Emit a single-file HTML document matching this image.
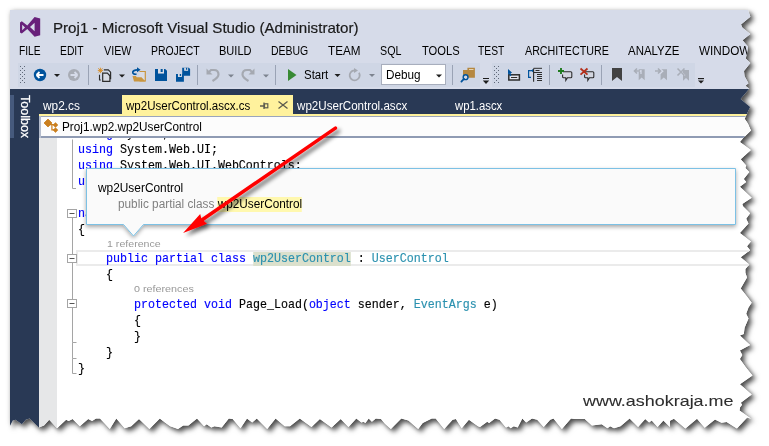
<!DOCTYPE html>
<html><head><meta charset="utf-8">
<style>
*{margin:0;padding:0;box-sizing:border-box}
html,body{width:769px;height:446px;overflow:hidden;background:#fff}
body{position:relative}
#sh{position:absolute;left:0;top:0;width:769px;height:446px;filter:drop-shadow(0 0 2.5px rgba(0,0,0,0.14)) drop-shadow(3px 3px 2.6px rgba(0,0,0,0.68))}
#win{position:absolute;left:0;top:0;width:769px;height:446px;background:#fff;clip-path:polygon(10px 10px,748px 10px,750.4px 16.8px,741px 24.6px,742.5px 27.8px,750.4px 34px,742.5px 40.3px,748px 46.6px,747.3px 52px,745.7px 58.4px,750.4px 63px,744px 71px,744.6px 76.3px,748.5px 83.3px,745.4px 85.7px,749.3px 88.8px,740.7px 99px,750.1px 106.9px,746.2px 115.5px,744.6px 118.7px,747.8px 123.4px,750.9px 130.4px,743px 138.3px,739.9px 142.1px,750.9px 149.9px,740.7px 159.3px,746.2px 165.6px,745.4px 168px,749.3px 171.9px,743.8px 179px,746.2px 182.1px,739.9px 186.8px,751.7px 197.8px,742.3px 204.1px,743px 206.3px,750.1px 213.3px,746.2px 218.8px,748.5px 223.5px,739.9px 233px,750.9px 241.6px,747px 246.3px,750.1px 250.2px,740.7px 257.3px,749.3px 264.4px,745.4px 269.1px,745.4px 272.8px,747px 277.6px,740.7px 288.5px,747px 296.4px,751.7px 302.7px,748.5px 307.4px,746.2px 313.7px,748.5px 318.4px,744.6px 327.8px,743.8px 334.1px,739.9px 335.5px,750.1px 344.9px,739.9px 350.4px,742.3px 355.1px,739.9px 359px,746.2px 367.7px,752.5px 375.5px,739.9px 384.2px,751.7px 394.4px,740.8px 402.7px,742.1px 404.7px,740.1px 407.2px,739.5px 410.4px,751.1px 418.8px,747.2px 417.5px,736.9px 428.5px,726.6px 422px,721.5px 422.7px,715px 419.5px,704.7px 427.8px,697px 418.8px,685.4px 428.5px,673.9px 418.8px,670px 420.7px,669.9px 426.9px,663.4px 420.4px,657.6px 426.9px,651.7px 420.4px,649.1px 422.4px,645.2px 419.1px,638.1px 426.9px,629.6px 418.5px,620.5px 426.3px,614px 428.2px,610.1px 426.3px,607.5px 428.2px,601.7px 424.3px,591.9px 425.6px,584.8px 419.1px,575px 419.1px,571px 418.5px,561.9px 428.9px,553.5px 418.5px,550.2px 419.8px,543.7px 426.9px,537.2px 419.8px,532px 418.5px,526.2px 422.4px,522.3px 418.5px,517.7px 427.6px,513.8px 426.3px,510.6px 428.2px,508.6px 426.3px,506px 427.6px,499.5px 419.8px,495px 418.5px,489.1px 423px,487.2px 421.7px,480px 426.9px,478px 426.3px,468.9px 419.8px,461.7px 428.2px,455.9px 419.1px,452.6px 419.8px,444.2px 428.9px,435.7px 418.5px,431.8px 418.5px,422.7px 423px,418.2px 428.9px,408.4px 420.4px,401.3px 418.5px,390.9px 428.9px,385px 423.7px,381px 419.1px,375.8px 418.5px,371.9px 421.7px,368.7px 418.5px,365.4px 423px,363.5px 421.7px,361.5px 422.4px,356.3px 418.5px,348.5px 426.9px,340.7px 419.1px,331.6px 427.6px,319.9px 419.1px,311.5px 426.9px,299.8px 418.5px,290px 426.3px,284.7px 426.3px,275.6px 418.5px,267.2px 428.9px,256.8px 418.5px,252.2px 422.4px,247px 418.5px,240.5px 428.2px,232.7px 419.1px,228.8px 418.5px,221.7px 427.6px,214.5px 426.3px,211.3px 427.6px,206.7px 424.3px,204.1px 426.3px,197px 418.5px,188.4px 425.6px,183.2px 425.6px,178px 428.9px,170.2px 426.3px,165px 422.4px,159.8px 418.5px,149.4px 428.9px,139px 419.1px,131.2px 426.3px,124.7px 428.2px,116.3px 418.5px,109.8px 428.9px,100px 418.5px,96px 418.5px,92.1px 421px,88.2px 419.1px,79.8px 426.3px,72.6px 419.1px,68.7px 421px,66.1px 419.8px,57px 428.2px,49.2px 419.8px,44px 425.6px,38.8px 427.6px,29.7px 418.5px,25.8px 419.8px,21.9px 424.3px,15.4px 419.8px,12.8px 420.4px,10.2px 425.6px,10px 425.6px)}
.a{position:absolute;white-space:pre}
svg.a{overflow:visible}
</style></head><body>
<div id="sh"><div id="win">
<div class="a" style="left:0px;top:0px;width:769px;height:89px;background:#D6DBE9;"></div>
<div class="a" style="left:18px;top:63px;width:462px;height:24px;background:#CFD6E5;"></div>
<div class="a" style="left:480px;top:63px;width:12px;height:24px;background:#D6DBE9;"></div>
<div class="a" style="left:492px;top:63px;width:203px;height:24px;background:#CFD6E5;"></div>
<div class="a" style="left:0px;top:89px;width:769px;height:25px;background:#293955;"></div>
<div class="a" style="left:0px;top:89px;width:39px;height:400px;background:#293955;"></div>
<div class="a" style="left:10px;top:95px;width:4px;height:43px;background:#465A7D;"></div>
<div class="a" style="left:39px;top:114px;width:730px;height:2px;background:#FFF29D;"></div>
<div class="a" style="left:39px;top:116px;width:730px;height:22px;background:#FCFCFC;"></div>
<div class="a" style="left:39px;top:116px;width:730px;height:1px;background:#AEB6C8;"></div>
<div class="a" style="left:39px;top:136px;width:730px;height:2px;background:#8F9BB3;"></div>
<div class="a" style="left:39px;top:116px;width:2px;height:22px;background:#B4BCCC;"></div>
<div class="a" style="left:39px;top:138px;width:18px;height:400px;background:#E6E7E8;"></div>
<div class="a" style="left:57px;top:138px;width:712px;height:400px;background:#FFFFFF;"></div>
<svg class="a" style="left:0;top:0" width="50" height="50" viewBox="0 0 50 50"><path d="M20 22.5 L21.8 21.3 L27.3 25.6 L34.6 17 L40.2 18.6 V35.2 L34.6 36.8 L27.3 29 L21.8 33.4 L20 32.4 Z M22.2 24.8 V30.2 L25 27.5 Z M34.6 22.8 V31.2 L30 27 Z" fill="#68217A" fill-rule="evenodd"/></svg>
<div class="a" id="t1" style="left:52.7px;top:20.30px;font:15px/15px 'Liberation Sans',sans-serif;color:#1A1A1A;transform:scaleX(1.007704638295672);transform-origin:0 0;-webkit-text-stroke:0.2px">Proj1 - Microsoft Visual Studio (Administrator)</div>
<div class="a" id="t2" style="left:19px;top:45.14px;font:12px/12px 'Liberation Sans',sans-serif;color:#000;transform:scaleX(0.8544287548138639);transform-origin:0 0;">FILE</div>
<div class="a" id="t3" style="left:60.4px;top:45.14px;font:12px/12px 'Liberation Sans',sans-serif;color:#000;transform:scaleX(0.8616844602609727);transform-origin:0 0;">EDIT</div>
<div class="a" id="t4" style="left:104.3px;top:45.14px;font:12px/12px 'Liberation Sans',sans-serif;color:#000;transform:scaleX(0.8964718272775145);transform-origin:0 0;">VIEW</div>
<div class="a" id="t5" style="left:150.8px;top:45.14px;font:12px/12px 'Liberation Sans',sans-serif;color:#000;transform:scaleX(0.8688440783868219);transform-origin:0 0;">PROJECT</div>
<div class="a" id="t6" style="left:219px;top:45.14px;font:12px/12px 'Liberation Sans',sans-serif;color:#000;transform:scaleX(0.9201091901728845);transform-origin:0 0;">BUILD</div>
<div class="a" id="t7" style="left:271.4px;top:45.14px;font:12px/12px 'Liberation Sans',sans-serif;color:#000;transform:scaleX(0.8731634182908545);transform-origin:0 0;">DEBUG</div>
<div class="a" id="t8" style="left:328.3px;top:45.14px;font:12px/12px 'Liberation Sans',sans-serif;color:#000;transform:scaleX(0.9739130434782609);transform-origin:0 0;">TEAM</div>
<div class="a" id="t9" style="left:380.3px;top:45.14px;font:12px/12px 'Liberation Sans',sans-serif;color:#000;transform:scaleX(0.8906992532247114);transform-origin:0 0;">SQL</div>
<div class="a" id="t10" style="left:421.6px;top:45.14px;font:12px/12px 'Liberation Sans',sans-serif;color:#000;transform:scaleX(0.9298495645288996);transform-origin:0 0;">TOOLS</div>
<div class="a" id="t11" style="left:477.8px;top:45.14px;font:12px/12px 'Liberation Sans',sans-serif;color:#000;transform:scaleX(0.8560294892048446);transform-origin:0 0;">TEST</div>
<div class="a" id="t12" style="left:524.6px;top:45.14px;font:12px/12px 'Liberation Sans',sans-serif;color:#000;transform:scaleX(0.8912481101965396);transform-origin:0 0;">ARCHITECTURE</div>
<div class="a" id="t13" style="left:628px;top:45.14px;font:12px/12px 'Liberation Sans',sans-serif;color:#000;transform:scaleX(0.9546019532406037);transform-origin:0 0;">ANALYZE</div>
<div class="a" id="t14" style="left:699.2px;top:45.14px;font:12px/12px 'Liberation Sans',sans-serif;color:#000;transform:scaleX(0.9756805807622504);transform-origin:0 0;">WINDOW</div>

<svg class="a" style="left:0;top:0" width="769" height="89" viewBox="0 0 769 89">
 <g fill="#5F6878"><rect x="20" y="66" width="1" height="1"/><rect x="24" y="66" width="1" height="1"/><rect x="20" y="70" width="1" height="1"/><rect x="24" y="70" width="1" height="1"/><rect x="20" y="74" width="1" height="1"/><rect x="24" y="74" width="1" height="1"/><rect x="20" y="78" width="1" height="1"/><rect x="24" y="78" width="1" height="1"/><rect x="20" y="82" width="1" height="1"/><rect x="24" y="82" width="1" height="1"/><rect x="22" y="68" width="1" height="1"/><rect x="22" y="72" width="1" height="1"/><rect x="22" y="76" width="1" height="1"/><rect x="22" y="80" width="1" height="1"/><rect x="494" y="66" width="1" height="1"/><rect x="498" y="66" width="1" height="1"/><rect x="494" y="70" width="1" height="1"/><rect x="498" y="70" width="1" height="1"/><rect x="494" y="74" width="1" height="1"/><rect x="498" y="74" width="1" height="1"/><rect x="494" y="78" width="1" height="1"/><rect x="498" y="78" width="1" height="1"/><rect x="494" y="82" width="1" height="1"/><rect x="498" y="82" width="1" height="1"/><rect x="496" y="68" width="1" height="1"/><rect x="496" y="72" width="1" height="1"/><rect x="496" y="76" width="1" height="1"/><rect x="496" y="80" width="1" height="1"/></g>
 <!-- back -->
 <circle cx="40" cy="75" r="6.2" fill="#00539C"/>
 <path d="M36.5 75 L39.5 72 M36.5 75 L39.5 78 M36.5 75 H43.5" stroke="#fff" stroke-width="1.8" fill="none"/>
 <path d="M54 74 H60 L57 77 Z" fill="#1E1E1E"/>
 <circle cx="74" cy="75" r="6" fill="#A8ACB5"/>
 <path d="M77.5 75 L74.5 72 M77.5 75 L74.5 78 M77.5 75 H70.5" stroke="#D6DBE9" stroke-width="1.8" fill="none"/>
 <!-- separators -->
 <g fill="#9AA3B5">
  <rect x="88" y="65" width="1" height="20"/><rect x="197" y="65" width="1" height="20"/><rect x="275" y="65" width="1" height="20"/>
  <rect x="452" y="65" width="1" height="20"/><rect x="549" y="65" width="1" height="20"/><rect x="601" y="65" width="1" height="20"/>
 </g>
 <!-- new project -->
 <g stroke="#D88A1E" stroke-width="0.9" fill="none"><path d="M98.3 68.3 L102.5 72.5 M102.5 68.3 L98.3 72.5 M100.4 67.7 V73.1 M97.8 70.4 H103"/></g>
 <path d="M103.8 69.9 H108.3 L110.6 72.2 V79.2" stroke="#2D2D2D" stroke-width="1.2" fill="none"/>
 <path d="M102.7 73.2 H107.3 L109.9 75.8 V81.4 H102.7 Z" stroke="#2D2D2D" stroke-width="1.2" fill="#D9DCE5"/>
 <path d="M99.5 74.8 V80 H100.8" stroke="#2D2D2D" stroke-width="1.1" fill="none"/>
 <path d="M119 74.5 H125 L122 77.5 Z" fill="#1E1E1E"/>
 <!-- open -->
 <path d="M139.5 71.5 H145.3 V81 H139.5" stroke="#C9963F" stroke-width="1.2" fill="#D9DCE5"/>
 <path d="M132.5 76 L135.8 76 L136.8 77.3 L141.5 77.3 L145.5 81.6 L134 81.6 Z" fill="#C9963F"/>
 <path d="M136.5 74.2 Q132.3 74.5 132.8 72 Q133.5 69.8 137.2 69.8" stroke="#00539C" stroke-width="1.7" fill="none"/>
 <path d="M137 67.3 L140.6 69.8 L137 72.3 Z" fill="#00539C"/>
 <!-- save -->
 <path d="M155 69 H165.2 L167 70.8 V81 H155 Z" fill="#00539C"/><rect x="158.00" y="69" width="6.00" height="4.56" fill="#DADDE6"/><rect x="160.64" y="69" width="2.04" height="3.00" fill="#00539C"/>
 <path d="M182.2 67.8 H188.915 L190.1 68.985 V75.7 H182.2 Z" fill="#00539C"/><rect x="184.17" y="67.8" width="3.95" height="3.00" fill="#DADDE6"/><rect x="185.91" y="67.8" width="1.34" height="1.98" fill="#00539C"/>
 <path d="M181.5 73.5 L184.5 76.5" stroke="#D6DBE9" stroke-width="0.8"/>
 <path d="M176 74 H182.715 L183.9 75.185 V81.8 H176 Z" fill="#00539C"/><rect x="177.97" y="74" width="3.95" height="2.96" fill="#DADDE6"/><rect x="179.71" y="74" width="1.34" height="1.95" fill="#00539C"/>
 <!-- undo/redo -->
 <path d="M208 73 L211 70 L214 70 Q218.5 70 218.5 74.5 Q218.5 77.5 212.5 81" stroke="#A5A9B1" stroke-width="2.2" fill="none"/>
 <path d="M206.5 68.5 V74.5 H212.5 Z" fill="#A5A9B1"/>
 <path d="M228 74.5 H234 L231 77.5 Z" fill="#7D838F"/>
 <path d="M253 73 L250 70 L247 70 Q242.5 70 242.5 74.5 Q242.5 77.5 248.5 81" stroke="#A5A9B1" stroke-width="2.2" fill="none"/>
 <path d="M254.5 68.5 V74.5 H248.5 Z" fill="#A5A9B1"/>
 <path d="M263 74.5 H269 L266 77.5 Z" fill="#7D838F"/>
 <!-- play -->
 <path d="M288 69 L296.5 75 L288 81 Z" fill="#388A34"/>
 <path d="M334.5 74 H340.5 L337.5 77 Z" fill="#1E1E1E"/>
 <!-- refresh -->
 <path d="M354.5 70.3 A5 5 0 1 0 359 72.8" stroke="#A5A9B1" stroke-width="1.8" fill="none"/>
 <path d="M354 68 L358 70.5 L354 73 Z" fill="#A5A9B1"/>
 <path d="M369 74 H375 L372 77 Z" fill="#7D838F"/>
 <!-- combo -->
 <rect x="381.5" y="64.5" width="64" height="20" fill="#FFFFFF" stroke="#A8AEBD"/>
 <path d="M436 74.5 H442 L439 77.5 Z" fill="#1E1E1E"/>
 <!-- find in files -->
 <path d="M463 69.9 H467.4 V67.8 H474.9 V77.7 H463 Z" fill="#B5873F"/>
 <rect x="469" y="69" width="4.5" height="1" fill="#E6D3B0"/>
 <circle cx="465.6" cy="77.2" r="2.4" stroke="#00539C" stroke-width="1.4" fill="#D3D6E0"/>
 <path d="M463.9 78.9 L461.4 81.6" stroke="#00539C" stroke-width="1.8" stroke-linecap="round"/>
 <rect x="483" y="78" width="6" height="1" fill="#1E1E1E"/><path d="M482.8 80.5 H489.2 L486 84 Z" fill="#1E1E1E"/>
 <!-- icon 1 -->
 <rect x="508.8" y="74.8" width="10.6" height="5.2" stroke="#2D2D2D" stroke-width="1.5" fill="#E2E5EE"/>
 <rect x="511" y="77" width="6.2" height="1" fill="#2D2D2D"/>
 <path d="M508 69 L512.2 72.8 L510.6 73.1 L511.4 75.6 L510 76.2 L509.2 73.6 L508 74.8 Z" fill="#00539C"/>
 <!-- icon 2 -->
 <path d="M530.8 70.6 H528.6 V77.4 H531" stroke="#00539C" stroke-width="1.2" fill="none"/>
 <path d="M530.5 70.6 H533" stroke="#00539C" stroke-width="1.1"/><path d="M532 69 L534 70.6 L532 72.2 Z" fill="#00539C"/>
 <path d="M533.6 68.5 V81.8" stroke="#2D2D2D" stroke-width="1.1"/>
 <g fill="#2D2D2D"><rect x="533.6" y="67.8" width="8.4" height="1"/><rect x="535.5" y="70" width="4" height="1"/><rect x="533.6" y="72" width="8.4" height="1"/><rect x="537" y="74" width="5" height="1"/><rect x="537" y="76" width="5" height="1"/><rect x="537" y="78" width="5" height="1"/><rect x="537" y="80" width="5" height="1"/></g>
 <!-- add comment -->
 <path d="M563 71.8 H570.8 Q571.8 71.8 571.8 72.8 V76.8 Q571.8 77.8 570.8 77.8 H567.5 L565.8 80.4 V77.8 H563.6 Q562.6 77.8 562.6 76.8 V74.5" stroke="#2D2D2D" stroke-width="1.1" fill="#D3D6E0"/>
 <path d="M561 68 V74 M558 71 H564" stroke="#1E7B1E" stroke-width="1.9"/>
 <!-- delete comment -->
 <path d="M585 71.8 H592.8 Q593.8 71.8 593.8 72.8 V76.8 Q593.8 77.8 592.8 77.8 H589.5 L587.8 80.4 V77.8 H585.6 Q584.6 77.8 584.6 76.8 V74.5" stroke="#2D2D2D" stroke-width="1.1" fill="#D3D6E0"/>
 <path d="M580.5 68.5 L587.5 74.7 M587.5 68.5 L580.5 74.7" stroke="#B5301A" stroke-width="1.8"/>
 <!-- bookmarks -->
 <path d="M612 68 H622 V81 L617 77 L612 81 Z" fill="#424242"/>
 <g fill="#A9AEB8">
 <path d="M638.7 69.2 H644.7 V80.3 L641.7 77.6 L638.7 80.3 Z"/>
 <path d="M660.6 69.2 H667 V80.3 L663.8 77.6 L660.6 80.3 Z"/>
 <path d="M683 70 H689 V80.7 L686 78 L683 80.7 Z"/>
 </g>
 <g stroke="#D6DBE9" stroke-width="1.2" fill="none"><path d="M636 71.2 H640.5 M641 70 L641 74"/><path d="M655.5 71.2 H661.5 M660 68.7 L662.8 71.2 L660 73.7"/><path d="M677.5 68.5 L685 75.5"/></g>
 <g stroke="#A9AEB8" stroke-width="1.6" fill="none"><path d="M634.5 71 H640 M637 68.5 L634.5 71 L637 73.5"/><path d="M655 71 H660.5 M658 68.5 L660.5 71 L658 73.5"/><path d="M677.5 68.5 L684.5 75.5 M684.5 68.5 L677.5 75.5"/></g>
 <rect x="695" y="63" width="11" height="24" fill="#D6DBE9"/>
 <rect x="698" y="78" width="6" height="1.2" fill="#1E1E1E"/><path d="M698 80.5 H704 L701 83.5 Z" fill="#1E1E1E"/>
</svg>
<div class="a" id="t15" style="left:304.4px;top:69.34px;font:12px/12px 'Liberation Sans',sans-serif;color:#000;transform:scaleX(0.9571245186136073);transform-origin:0 0;">Start</div>
<div class="a" id="t16" style="left:386px;top:69.34px;font:12px/12px 'Liberation Sans',sans-serif;color:#000;transform:scaleX(0.9774545454545455);transform-origin:0 0;">Debug</div>
<div class="a" style="left:122px;top:95px;width:171px;height:19px;background:#FFF29D;"></div>
<div class="a" id="t17" style="left:42.9px;top:99.84px;font:12px/12px 'Liberation Sans',sans-serif;color:#FFFFFF;transform:scaleX(0.9873657069187795);transform-origin:0 0;">wp2.cs</div>
<div class="a" id="t18" style="left:126.4px;top:99.84px;font:12px/12px 'Liberation Sans',sans-serif;color:#000;transform:scaleX(0.9604673807205453);transform-origin:0 0;">wp2UserControl.ascx.cs</div>
<svg class="a" style="left:0;top:0" width="769" height="120" viewBox="0 0 769 120"><path d="M260 106 H264" stroke="#5D5D4F" stroke-width="1.3"/><path d="M264 102.5 V109" stroke="#5D5D4F" stroke-width="1.3"/><rect x="264.5" y="103.8" width="3.3" height="4" stroke="#5D5D4F" stroke-width="1.2" fill="none"/><path d="M278.5 101.5 L287.5 108.5 M287.5 101.5 L278.5 108.5" stroke="#5D5D4F" stroke-width="1.3"/></svg>
<div class="a" id="t19" style="left:297.3px;top:99.84px;font:12px/12px 'Liberation Sans',sans-serif;color:#FFFFFF;transform:scaleX(0.9668555632342778);transform-origin:0 0;">wp2UserControl.ascx</div>
<div class="a" id="t20" style="left:454.6px;top:99.84px;font:12px/12px 'Liberation Sans',sans-serif;color:#FFFFFF;transform:scaleX(0.944295729764181);transform-origin:0 0;">wp1.ascx</div>
<div class="a" style="left:31px;top:95.4px;width:0;height:0"><div style="transform:rotate(90deg) scaleX(1.0);transform-origin:0 0;font:12.5px/12.5px Liberation Sans,sans-serif;color:#FFFFFF;-webkit-text-stroke:0.25px #fff;white-space:pre;position:absolute;left:0;top:0">Toolbox</div></div>
<div class="a" style="left:76px;top:250px;width:700px;height:16px;border:2px solid #EBEBEB;border-right:none"></div>
<div class="a" id="t21" style="left:78px;top:128.15px;font:12.2px/12.2px 'Liberation Mono',monospace;color:#000;transform:scaleX(0.9562841530054645);transform-origin:0 0;-webkit-text-stroke:0.15px"><span style="color:#00f">using</span> System;</div>
<div class="a" id="t22" style="left:78px;top:144.15px;font:12.2px/12.2px 'Liberation Mono',monospace;color:#000;transform:scaleX(0.9562841530054645);transform-origin:0 0;-webkit-text-stroke:0.15px"><span style="color:#00f">using</span> System.Web.UI;</div>
<div class="a" id="t23" style="left:78px;top:160.15px;font:12.2px/12.2px 'Liberation Mono',monospace;color:#000;transform:scaleX(0.9562841530054645);transform-origin:0 0;-webkit-text-stroke:0.15px"><span style="color:#00f">using</span> System.Web.UI.WebControls;</div>
<div class="a" id="t24" style="left:78px;top:176.15px;font:12.2px/12.2px 'Liberation Mono',monospace;color:#000;transform:scaleX(0.9562841530054645);transform-origin:0 0;-webkit-text-stroke:0.15px"><span style="color:#00f">using</span> System.Web.UI.HtmlControls;</div>
<div class="a" id="t25" style="left:78px;top:208.45px;font:12.2px/12.2px 'Liberation Mono',monospace;color:#000;transform:scaleX(0.9562841530054645);transform-origin:0 0;-webkit-text-stroke:0.15px"><span style="color:#00f">namespace</span> Proj1.wp2</div>
<div class="a" id="t26" style="left:78px;top:224.45px;font:12.2px/12.2px 'Liberation Mono',monospace;color:#000;transform:scaleX(0.9562841530054645);transform-origin:0 0;-webkit-text-stroke:0.15px"><span style="display:inline-block;transform:scaleY(1.1);transform-origin:50% 62%">{</span></div>
<div class="a" id="t27" style="left:106px;top:253.45px;font:12.2px/12.2px 'Liberation Mono',monospace;color:#000;transform:scaleX(0.9562841530054645);transform-origin:0 0;-webkit-text-stroke:0.15px"><span style="color:#00f">public</span> <span style="color:#00f">partial</span> <span style="color:#00f">class</span> <span style="color:#2B91AF;background:#DBE0CC">wp2UserControl</span> : <span style="color:#2B91AF">UserControl</span></div>
<div class="a" id="t28" style="left:106px;top:269.45px;font:12.2px/12.2px 'Liberation Mono',monospace;color:#000;transform:scaleX(0.9562841530054645);transform-origin:0 0;-webkit-text-stroke:0.15px"><span style="display:inline-block;transform:scaleY(1.1);transform-origin:50% 62%">{</span></div>
<div class="a" id="t29" style="left:134px;top:298.65px;font:12.2px/12.2px 'Liberation Mono',monospace;color:#000;transform:scaleX(0.9562841530054645);transform-origin:0 0;-webkit-text-stroke:0.15px"><span style="color:#00f">protected</span> <span style="color:#00f">void</span> Page_Load(<span style="color:#00f">object</span> sender, <span style="color:#2B91AF">EventArgs</span> e)</div>
<div class="a" id="t30" style="left:134px;top:314.65px;font:12.2px/12.2px 'Liberation Mono',monospace;color:#000;transform:scaleX(0.9562841530054645);transform-origin:0 0;-webkit-text-stroke:0.15px"><span style="display:inline-block;transform:scaleY(1.1);transform-origin:50% 62%">{</span></div>
<div class="a" id="t31" style="left:134px;top:330.65px;font:12.2px/12.2px 'Liberation Mono',monospace;color:#000;transform:scaleX(0.9562841530054645);transform-origin:0 0;-webkit-text-stroke:0.15px"><span style="display:inline-block;transform:scaleY(1.1);transform-origin:50% 62%">}</span></div>
<div class="a" id="t32" style="left:106px;top:346.65px;font:12.2px/12.2px 'Liberation Mono',monospace;color:#000;transform:scaleX(0.9562841530054645);transform-origin:0 0;-webkit-text-stroke:0.15px"><span style="display:inline-block;transform:scaleY(1.1);transform-origin:50% 62%">}</span></div>
<div class="a" id="t33" style="left:78px;top:362.65px;font:12.2px/12.2px 'Liberation Mono',monospace;color:#000;transform:scaleX(0.9562841530054645);transform-origin:0 0;-webkit-text-stroke:0.15px"><span style="display:inline-block;transform:scaleY(1.1);transform-origin:50% 62%">}</span></div>
<div class="a" id="t34" style="left:106.7px;top:240.18px;font:9px/9px 'Liberation Sans',sans-serif;color:#999999;transform:scaleX(1.1789473684210525);transform-origin:0 0;">1 reference</div>
<div class="a" id="t35" style="left:134.3px;top:284.88px;font:9px/9px 'Liberation Sans',sans-serif;color:#999999;transform:scaleX(1.1951561504142767);transform-origin:0 0;">0 references</div>
<svg class="a" style="left:0;top:0" width="769" height="446" viewBox="0 0 769 446">
<g stroke="#A5A5A5" fill="none" stroke-width="1">
<path d="M72.5 139.5 V188.5 H76"/>
<rect x="67.5" y="209.5" width="9" height="8" fill="#fff"/><path d="M69.5 213.5 H74.5" stroke="#555"/>
<path d="M72.5 218 V254"/>
<rect x="67.5" y="254.5" width="9" height="8" fill="#fff"/><path d="M69.5 258.5 H74.5" stroke="#555"/>
<path d="M72.5 263 V299"/>
<rect x="67.5" y="299.5" width="9" height="8" fill="#fff"/><path d="M69.5 303.5 H74.5" stroke="#555"/>
<path d="M72.5 308 V342.5 H76.5 M72.5 342.5 V358.5 H76.5 M72.5 358.5 V373.5 H76.5"/>
</g></svg>
<div class="a" style="left:39px;top:116px;width:730px;height:22px;background:#FCFCFC;"></div>
<div class="a" style="left:39px;top:116px;width:730px;height:1px;background:#9AA5BC;"></div>
<div class="a" style="left:39px;top:136px;width:730px;height:2px;background:#8F9BB3;"></div>
<div class="a" style="left:39px;top:116px;width:2px;height:22px;background:#B4BCCC;"></div>
<svg class="a" style="left:0;top:0" width="70" height="140" viewBox="0 0 70 140"><path d="M48 119 L52 123 L48 127 L44 123 Z" fill="#CA7F1E" stroke="#CA7F1E" stroke-width="0.8" stroke-linejoin="round"/><path d="M55.5 122.6 L57.9 125 L55.5 127.4 L53.1 125 Z M55.5 127.7 L57.9 130.1 L55.5 132.5 L53.1 130.1 Z" fill="#CA7F1E" stroke="#CA7F1E" stroke-width="0.6"/><path d="M50 124.6 H55 M51.9 124.6 V129.8 H55" stroke="#CA7F1E" stroke-width="1.2" fill="none"/></svg>
<div class="a" id="t36" style="left:61.6px;top:120.64px;font:12px/12px 'Liberation Sans',sans-serif;color:#000;transform:scaleX(0.9792966596847096);transform-origin:0 0;">Proj1.wp2.wp2UserControl</div>
<svg class="a" style="left:0;top:0" width="769" height="446" viewBox="0 0 769 446">
<defs><filter id="fts" x="-10%" y="-30%" width="120%" height="160%"><feGaussianBlur in="SourceAlpha" stdDeviation="2"/><feOffset dx="0" dy="2"/><feComponentTransfer><feFuncA type="linear" slope="0.35"/></feComponentTransfer><feMerge><feMergeNode/><feMergeNode in="SourceGraphic"/></feMerge></filter></defs>
<path d="M86.5 168.5 H735.5 V224.5 H143.5 L133.5 236 L123.5 224.5 H86.5 Z" fill="#FAFAFA" stroke="#7BC1E5" stroke-width="1" filter="url(#fts)"/>
</svg>
<div class="a" id="t37" style="left:97.5px;top:181.64px;font:12px/12px 'Liberation Sans',sans-serif;color:#000;transform:scaleX(0.9900422561087636);transform-origin:0 0;">wp2UserControl</div>
<div class="a" id="t38" style="left:117.8px;top:198.44px;font:12px/12px 'Liberation Sans',sans-serif;color:#808080;transform:scaleX(0.9826349312772377);transform-origin:0 0;">public partial class <span style="color:#000;background:#FFF8AE;padding:0 0 1px">wp2UserControl</span></div>
<div class="a" id="t39" style="left:582.7px;top:392.90px;font:15px/15px 'Liberation Sans',sans-serif;color:#2D2D2D;transform:scaleX(1.1954460152633555);transform-origin:0 0;-webkit-text-stroke:0.08px">www.ashokraja.me</div>
</div></div>
<svg style="position:absolute;left:0;top:0" width="769" height="446" viewBox="0 0 769 446">
<defs><filter id="as" x="-20%" y="-20%" width="140%" height="140%"><feGaussianBlur in="SourceAlpha" stdDeviation="2"/><feOffset dx="3" dy="3"/><feComponentTransfer><feFuncA type="linear" slope="0.6"/></feComponentTransfer><feMerge><feMergeNode/><feMergeNode in="SourceGraphic"/></feMerge></filter></defs>
<g filter="url(#as)">
<path d="M335.4 128.1 L199 222" stroke="#FF0000" stroke-width="3.5" stroke-linecap="round"/>
<path d="M183.1 233.1 L200.2 213.9 L201.5 219 L207 223.7 Z" fill="#FF0000"/>
</g></svg>
</body></html>
